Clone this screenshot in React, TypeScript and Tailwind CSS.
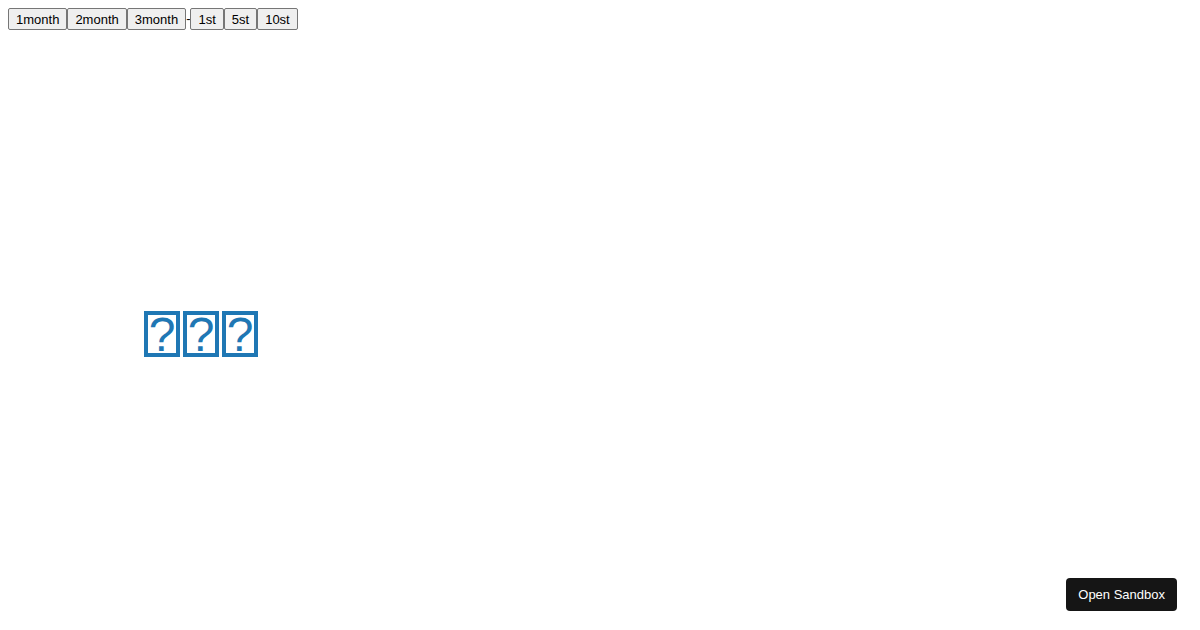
const btn =
  "h-[22px] px-[7px] border border-[#767676] rounded-[2px] bg-[#efefef] text-[13px] leading-none text-black font-['Liberation_Sans',Arial,sans-serif]";

function Tofu() {
  return (
    <div className="w-[36px] h-[46px] border-[4px] border-[#1f77b4] flex items-center justify-center pt-[2px] text-[48px] leading-none text-[#1f77b4] font-['Liberation_Sans',Arial,sans-serif]">
      ?
    </div>
  );
}

export default function App() {
  return (
    <div className="relative w-[1200px] h-[630px] bg-white font-['Liberation_Sans',Arial,sans-serif]">
      <div className="flex items-center pl-2 pt-2">
        <button className={btn}>1month</button>
        <button className={btn}>2month</button>
        <button className={btn}>3month</button>
        <span className="text-[13px] text-black">-</span>
        <button className={btn}>1st</button>
        <button className={btn}>5st</button>
        <button className={btn}>10st</button>
      </div>
      {/* chart label rendered as missing glyphs */}
      <div className="flex gap-[3px] pl-[144px] pt-[281px]">
        <Tofu />
        <Tofu />
        <Tofu />
      </div>
      <button className="absolute right-[23px] bottom-[19px] h-[33px] px-[12px] rounded-[4px] bg-[#151515] text-white text-[13px] font-['Liberation_Sans',Arial,sans-serif]">
        Open Sandbox
      </button>
    </div>
  );
}
